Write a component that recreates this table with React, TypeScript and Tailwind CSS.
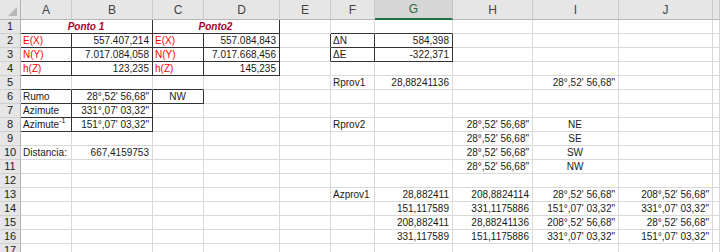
import React from "react";

const COLS = ["A", "B", "C", "D", "E", "F", "G", "H", "I", "J", "K"];
const ROWS = 17;

type Cell = {
  v: React.ReactNode;
  a?: "l" | "r" | "c";
  cls?: string;
  span?: number;
};

const red = "text-[#ff0000]";
const title = "font-bold italic text-[#a8002a]";

const deg = (d: string, m: string, s: string) => `${d}°,${m}' ${s}"`;

const cells: Record<string, Cell> = {
  A1: { v: "Ponto 1", a: "c", cls: title, span: 2 },
  C1: { v: "Ponto2", a: "c", cls: title, span: 2 },
  A2: { v: "E(X)", cls: red },
  B2: { v: "557.407,214", a: "r" },
  C2: { v: "E(X)", cls: red },
  D2: { v: "557.084,843", a: "r" },
  A3: { v: "N(Y)", cls: red },
  B3: { v: "7.017.084,058", a: "r" },
  C3: { v: "N(Y)", cls: red },
  D3: { v: "7.017.668,456", a: "r" },
  A4: { v: "h(Z)", cls: red },
  B4: { v: "123,235", a: "r" },
  C4: { v: "h(Z)", cls: red },
  D4: { v: "145,235", a: "r" },
  F2: { v: "ΔN" },
  G2: { v: "584,398", a: "r" },
  F3: { v: "ΔE" },
  G3: { v: "-322,371", a: "r" },
  F5: { v: "Rprov1" },
  G5: { v: "28,88241136", a: "r" },
  I5: { v: deg("28", "52", "56,68"), a: "r" },
  A6: { v: "Rumo" },
  B6: { v: deg("28", "52", "56,68"), a: "r" },
  C6: { v: "NW", a: "c" },
  A7: { v: "Azimute" },
  B7: { v: deg("331", "07", "03,32"), a: "r" },
  A8: {
    v: (
      <>
        Azimute<sup className="text-[7px] -top-[4px]">-1</sup>
      </>
    ),
  },
  B8: { v: deg("151", "07", "03,32"), a: "r" },
  F8: { v: "Rprov2" },
  H8: { v: deg("28", "52", "56,68"), a: "r" },
  H9: { v: deg("28", "52", "56,68"), a: "r" },
  H10: { v: deg("28", "52", "56,68"), a: "r" },
  H11: { v: deg("28", "52", "56,68"), a: "r" },
  I8: { v: "NE", a: "c" },
  I9: { v: "SE", a: "c" },
  I10: { v: "SW", a: "c" },
  I11: { v: "NW", a: "c" },
  A10: { v: "Distancia:" },
  B10: { v: "667,4159753", a: "r" },
  F13: { v: "Azprov1" },
  G13: { v: "28,882411", a: "r" },
  G14: { v: "151,117589", a: "r" },
  G15: { v: "208,882411", a: "r" },
  G16: { v: "331,117589", a: "r" },
  H13: { v: "208,8824114", a: "r" },
  H14: { v: "331,1175886", a: "r" },
  H15: { v: "28,88241136", a: "r" },
  H16: { v: "151,1175886", a: "r" },
  I13: { v: deg("28", "52", "56,68"), a: "r" },
  I14: { v: deg("151", "07", "03,32"), a: "r" },
  I15: { v: deg("208", "52", "56,68"), a: "r" },
  I16: { v: deg("331", "07", "03,32"), a: "r" },
  J13: { v: deg("208", "52", "56,68"), a: "r" },
  J14: { v: deg("331", "07", "03,32"), a: "r" },
  J15: { v: deg("28", "52", "56,68"), a: "r" },
  J16: { v: deg("151", "07", "03,32"), a: "r" },
};

// bordered ranges: [row1, col1, row2, col2], col index from 0 (A)
const boxes = [
  [1, 0, 4, 1],
  [1, 2, 4, 3],
  [2, 5, 3, 6],
  [6, 0, 6, 2],
  [7, 0, 8, 1],
];

const inBox = (r: number, c: number) =>
  boxes.some(([r1, c1, r2, c2]) => r >= r1 && r <= r2 && c >= c1 && c <= c2);

const covered = new Set(["B1", "D1"]);

export default function App() {
  const rows = [];
  for (let r = 1; r <= ROWS; r++) {
    rows.push(
      <div
        key={`h${r}`}
        className="flex items-center justify-center bg-[#e6e6e6] border-r border-r-[#b4b4b4] border-b border-b-[#d0d0d0] text-[11px] text-[#222]"
      >
        {r}
      </div>
    );
    COLS.forEach((col, c) => {
      const id = `${col}${r}`;
      if (covered.has(id)) return;
      const cell = cells[id];
      const span = cell?.span ?? 1;
      const last = c + span - 1;
      const darkR = inBox(r, last) || inBox(r, last + 1);
      const darkB = inBox(r, c) || inBox(r + 1, c);
      const align =
        cell?.a === "r" ? "justify-end" : cell?.a === "c" ? "justify-center" : "justify-start";
      rows.push(
        <div
          key={id}
          className={`flex items-center overflow-visible whitespace-nowrap pl-[2px] pr-[3px] leading-[12px] border-r border-b ${
            darkR ? "border-r-[#333]" : "border-r-[#d9d9d9]"
          } ${darkB ? "border-b-[#333]" : "border-b-[#d9d9d9]"} ${align} ${
            span === 2 ? "col-span-2" : ""
          } ${cell?.cls ?? "text-[#1a1a1a]"}`}
        >
          {cell?.v}
        </div>
      );
    });
  }

  return (
    <div className="w-[720px] h-[252px] overflow-hidden bg-white" style={{ fontFamily: '"Liberation Sans", Arial, sans-serif' }}>
      <div className="grid grid-cols-[21px_51px_81px_51px_76px_51px_44px_78px_80px_86px_94px_1fr] grid-rows-[20px_repeat(17,14px)] text-[10px]">
        {/* corner */}
        <div className="relative bg-[#e6e6e6] border-r border-r-[#b4b4b4] border-b border-b-[#b4b4b4]">
          <svg className="absolute right-[3px] bottom-[3px]" width="9" height="9" viewBox="0 0 9 9">
            <polygon points="9,0 9,9 0,9" fill="#b8b8b8" />
          </svg>
        </div>
        {COLS.map((col) =>
          col === "G" ? (
            <div
              key={col}
              className="flex items-center justify-center bg-[#d6d6d6] border-r border-r-[#c4c4c4] border-b-2 border-b-[#217346] text-[12px] text-[#2a6a45]"
            >
              {col}
            </div>
          ) : (
            <div
              key={col}
              className="flex items-center justify-center bg-[#e6e6e6] border-r border-r-[#cacaca] border-b border-b-[#b4b4b4] text-[12px] text-[#444]"
            >
              {col === "K" ? "" : col}
            </div>
          )
        )}
        {rows}
      </div>
    </div>
  );
}
